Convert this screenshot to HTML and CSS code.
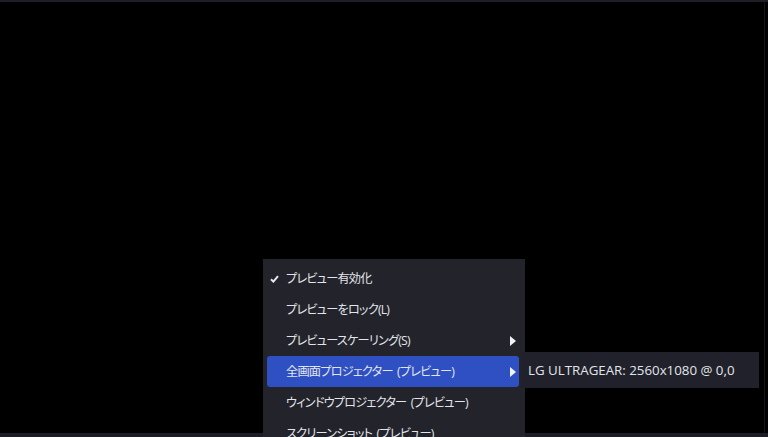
FILE: index.html
```html
<!DOCTYPE html>
<html lang="ja">
<head>
<meta charset="utf-8">
<link rel="stylesheet" href="styles.css">
</head>
<body>
<div class="topbar"></div>
<div class="preview"></div>
<div class="bottombar"></div>

<div class="menu">
  <div class="item"><svg class="check" width="9" height="8" viewBox="0 0 9 8"><path d="M1 4.2 L3.4 6.6 L8 1.2" fill="none" stroke="#e8e9ee" stroke-width="2"/></svg>プレビュー有効化</div>
  <div class="item">プレビューをロック(L)</div>
  <div class="item has-sub">プレビュースケーリング(S)<span class="arrow"></span></div>
  <div class="item has-sub active">全画面プロジェクター (プレビュー)<span class="arrow"></span></div>
  <div class="item">ウィンドウプロジェクター (プレビュー)</div>
  <div class="item">スクリーンショット (プレビュー)</div>
</div>

<div class="submenu">
  <div class="subitem">LG ULTRAGEAR: 2560x1080 @ 0,0</div>
</div>
</body>
</html>
```

FILE: styles.css
```css
html, body {
  margin: 0;
  padding: 0;
  width: 768px;
  height: 437px;
  overflow: hidden;
  background: #000000;
  font-family: "Open Sans", "Noto Sans CJK JP", sans-serif;
  font-size: 13px;
  color: #e4e5ea;
}

body {
  display: flex;
  flex-direction: column;
  position: relative;
}

.topbar {
  height: 2px;
  background: #1d1e28;
  flex: none;
}

.preview {
  flex: 1;
  background: #000000;
  border-right: 1px solid #14151c;
  margin-right: 3px;
}

.bottombar {
  height: 4px;
  background: #1c1d26;
  flex: none;
}

.menu {
  position: absolute;
  left: 263px;
  top: 259px;
  width: 262px;
  height: 190px;
  background: #22232b;
  padding-top: 4px;
  box-sizing: border-box;
}

.item {
  position: relative;
  height: 31px;
  line-height: 32px;
  margin: 0 6px 0 4px;
  padding-left: 19px;
  border-radius: 3px;
  white-space: nowrap;
  font-size: 12.2px;
  font-feature-settings: "palt";
  letter-spacing: -0.8px;
  word-spacing: 2px;
}

.item.active {
  background: #2e50c3;
}

.check {
  position: absolute;
  left: 3px;
  top: 12px;
}

.arrow {
  position: absolute;
  right: 3px;
  top: 10.5px;
  width: 0;
  height: 0;
  border-top: 5px solid transparent;
  border-bottom: 5px solid transparent;
  border-left: 6px solid #f2f3f6;
}

.submenu {
  position: absolute;
  left: 521px;
  top: 352px;
  width: 238px;
  height: 36px;
  background: #20212a;
  box-sizing: border-box;
  padding-left: 7px;
}

.subitem {
  line-height: 37px;
  white-space: nowrap;
  font-size: 13.3px;
}
```
